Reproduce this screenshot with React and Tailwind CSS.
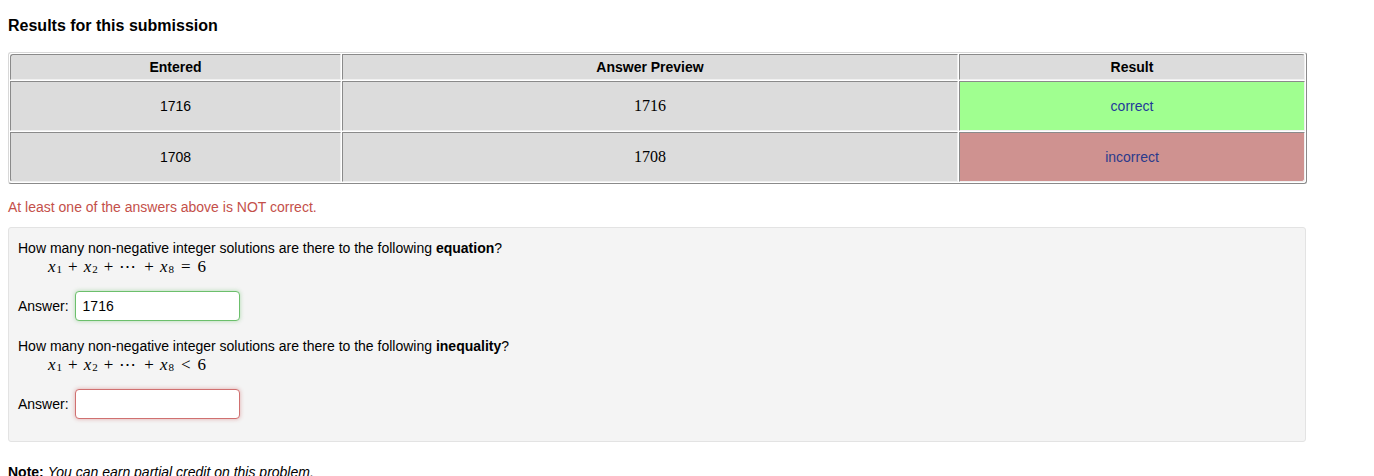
import React from "react";

const sans = { fontFamily: '"Liberation Sans", Arial, sans-serif' };
const serif = { fontFamily: '"Liberation Serif", "Times New Roman", serif' };

function MathX({ rel }) {
  return (
    <div className="pl-[30px] h-[20px] flex items-center text-[17px] text-black" style={serif}>
      <i>x</i><sub className="text-[11px] relative top-[2px] ml-[1px]">1</sub>
      <span className="mx-[6px]">+</span>
      <i>x</i><sub className="text-[11px] relative top-[2px] ml-[1px]">2</sub>
      <span className="mx-[6px]">+</span>
      <span className="tracking-[2px]">⋯</span>
      <span className="mx-[6px]">+</span>
      <i>x</i><sub className="text-[11px] relative top-[2px] ml-[1px]">8</sub>
      <span className="mx-[7px]">{rel}</span>
      <span>6</span>
    </div>
  );
}

export default function App() {
  const th = "h-[26px] bg-[#dcdcdc] border border-t-[#8a8a8a] border-l-[#8a8a8a] border-b-[#f0f0f0] border-r-[#f0f0f0] text-[14px] font-bold text-black text-center";
  const td = "h-[50px] border border-t-[#8a8a8a] border-l-[#8a8a8a] border-b-[#f0f0f0] border-r-[#f0f0f0] text-[14px] text-center";
  return (
    <div className="bg-white w-[1374px] h-[476px] overflow-hidden px-[8px] pt-[16px] text-black" style={sans}>
      <h2 className="text-[16px] font-bold leading-[20px] mb-[16px]">Results for this submission</h2>
      <table className="w-[1299px] border-separate border-spacing-[1px] border border-t-[#d8d8d8] border-l-[#d8d8d8] border-b-[#8a8a8a] border-r-[#8a8a8a] rounded-[3px]">
        <thead>
          <tr>
            <th className={th + " w-[331px] rounded-tl-[3px]"}>Entered</th>
            <th className={th + " w-[616px]"}>Answer Preview</th>
            <th className={th + " rounded-tr-[3px]"}>Result</th>
          </tr>
        </thead>
        <tbody>
          <tr>
            <td className={td + " bg-[#dcdcdc]"}>1716</td>
            <td className={td + " bg-[#dcdcdc] text-[16px]"} style={serif}>1716</td>
            <td className={td + " bg-[#a0ff90] text-[#22399a]"}>correct</td>
          </tr>
          <tr>
            <td className={td + " bg-[#dcdcdc] rounded-bl-[3px]"}>1708</td>
            <td className={td + " bg-[#dcdcdc] text-[16px]"} style={serif}>1708</td>
            <td className={td + " bg-[#cf9290] text-[#2a3a8c] rounded-br-[3px]"}>incorrect</td>
          </tr>
        </tbody>
      </table>
      <p className="text-[14px] text-[#c4504a] leading-[18px] mt-[14px]">At least one of the answers above is NOT correct.</p>
      <div className="mt-[11px] w-[1298px] h-[215px] bg-[#f4f4f4] border border-[#e3e3e3] rounded-[3px] px-[9px] pt-[11px]">
        <p className="text-[14px] leading-[18px]">How many non-negative integer solutions are there to the following <b>equation</b>?</p>
        <MathX rel="=" />
        <div className="flex items-center gap-[6px] mt-[14px]">
          <span className="text-[14px]">Answer:</span>
          <div className="w-[165px] h-[30px] bg-white border border-[#6cbf6c] rounded-[4px] shadow-[0_0_4px_rgba(92,184,92,0.45)] flex items-center px-[7px] text-[14px]">1716</div>
        </div>
        <p className="text-[14px] leading-[18px] mt-[16px]">How many non-negative integer solutions are there to the following <b>inequality</b>?</p>
        <MathX rel="<" />
        <div className="flex items-center gap-[6px] mt-[14px]">
          <span className="text-[14px]">Answer:</span>
          <div className="w-[165px] h-[30px] bg-white border border-[#d07070] rounded-[4px] shadow-[0_0_4px_rgba(200,80,80,0.45)]"></div>
        </div>
      </div>
      <p className="text-[14px] leading-[18px] mt-[21px]"><b>Note:</b> <i>You can earn partial credit on this problem.</i></p>
    </div>
  );
}
